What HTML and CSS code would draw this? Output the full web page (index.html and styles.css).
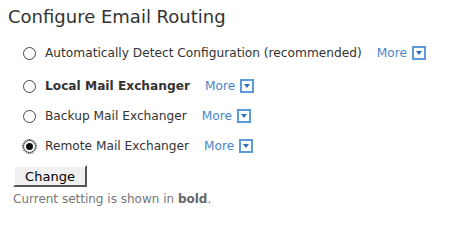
FILE: index.html
```html
<!DOCTYPE html>
<html lang="en">
<head>
    <meta charset="UTF-8">
    <title>Configure Email Routing</title>
    <link rel="stylesheet" href="styles.css">
</head>
<body>
    <div class="routing-panel">
        <h1>Configure Email Routing</h1>

        <ul class="route-list">
            <li class="route-item">
                <label><input type="radio" name="route"> Automatically Detect Configuration (recommended)</label>
                <a class="more-link" href="#">More <span class="more-icon"></span></a>
            </li>
            <li class="route-item">
                <label class="current"><input type="radio" name="route"> Local Mail Exchanger</label>
                <a class="more-link" href="#">More <span class="more-icon"></span></a>
            </li>
            <li class="route-item">
                <label><input type="radio" name="route"> Backup Mail Exchanger</label>
                <a class="more-link" href="#">More <span class="more-icon"></span></a>
            </li>
            <li class="route-item">
                <label><input type="radio" name="route" class="focused" checked> Remote Mail Exchanger</label>
                <a class="more-link" href="#">More <span class="more-icon"></span></a>
            </li>
        </ul>

        <button class="change-btn">Change</button>
        <p class="note">Current setting is shown in <b>bold</b>.</p>
    </div>
</body>
</html>
```

FILE: styles.css
```css
* {
    margin: 0;
    padding: 0;
    box-sizing: border-box;
}

body {
    font-family: "DejaVu Sans", Verdana, sans-serif;
    font-size: 12px;
    color: #333;
    background: #fff;
}

.routing-panel {
    padding: 6px 13px;
}

h1 {
    font-size: 18px;
    font-weight: normal;
    color: #333;
    margin-left: -5px;
    margin-bottom: 11px;
}

.route-list {
    list-style: none;
    padding-left: 10px;
    font-size: 12.2px;
}

.route-item {
    display: flex;
    align-items: center;
    height: 30px;
}

.route-item:first-child {
    margin-bottom: 3px;
}

.route-item label {
    display: flex;
    align-items: center;
    gap: 9px;
}

.route-item label.current {
    font-weight: bold;
}

.route-item input {
    appearance: none;
    width: 13px;
    height: 13px;
    margin: 0;
    border: 1px solid #444;
    border-radius: 50%;
    background: #fff;
    position: relative;
}

.route-item input:checked::after {
    content: "";
    position: absolute;
    left: 2px;
    top: 2px;
    width: 7px;
    height: 7px;
    border-radius: 50%;
    background: #111;
}

.route-item input.focused {
    outline: 1px dotted #333;
    outline-offset: 0;
}

.more-link {
    margin-left: 15px;
    color: #4a86c8;
    text-decoration: none;
    display: flex;
    align-items: center;
    gap: 5px;
}

.more-icon {
    width: 14px;
    height: 14px;
    border: 2px solid #5b9bdc;
    background: #fff;
    position: relative;
}

.more-icon::after {
    content: "";
    position: absolute;
    left: 2px;
    top: 3px;
    border-left: 3px solid transparent;
    border-right: 3px solid transparent;
    border-top: 4px solid #2f6fb8;
}

.change-btn {
    font-family: "DejaVu Sans", Verdana, sans-serif;
    font-size: 13px;
    color: #000;
    background: #f0f0f0;
    border: 2px solid;
    border-color: #fff #555 #555 #fff;
    width: 74px;
    height: 22px;
    margin-top: 4px;
}

.note {
    color: #777;
    margin-top: 5px;
}

.note b {
    color: #666;
}
```
